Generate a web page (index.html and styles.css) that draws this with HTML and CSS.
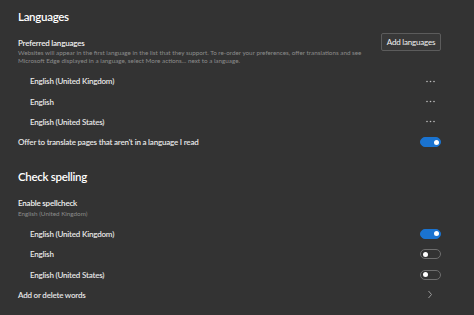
FILE: index.html
```html
<!DOCTYPE html>
<html lang="en">
    <head>
        <meta charset="UTF-8">
        <meta name="viewport" content="width=device-width, initial-scale=1.0">
        <title>Languages</title>
        <link rel="stylesheet" href="styles.css">
    </head>
    <body>
        <div class="page">

            <h2 class="heading">Languages</h2>

            <div class="pref">
                <div class="pref-text">
                    <div class="title">Preferred languages</div>
                    <div class="desc">Websites will appear in the first language in the list that they support. To re-order your preferences, offer translations and see
                        <br>Microsoft Edge displayed in a language, select More actions... next to a language.</div>
                </div>
                <button class="btn">Add languages</button>
            </div>

            <div class="list">
                <div class="row sub">
                    <span>English (United Kingdom)</span>
                    <svg class="more" width="9" height="3" viewBox="0 0 9 3"><circle cx="1" cy="1.5" r="0.8"/><circle cx="4.5" cy="1.5" r="0.8"/><circle cx="8" cy="1.5" r="0.8"/></svg>
                </div>
                <div class="row sub">
                    <span>English</span>
                    <svg class="more" width="9" height="3" viewBox="0 0 9 3"><circle cx="1" cy="1.5" r="0.8"/><circle cx="4.5" cy="1.5" r="0.8"/><circle cx="8" cy="1.5" r="0.8"/></svg>
                </div>
                <div class="row sub">
                    <span>English (United States)</span>
                    <svg class="more" width="9" height="3" viewBox="0 0 9 3"><circle cx="1" cy="1.5" r="0.8"/><circle cx="4.5" cy="1.5" r="0.8"/><circle cx="8" cy="1.5" r="0.8"/></svg>
                </div>
                <div class="row">
                    <span>Offer to translate pages that aren't in a language I read</span>
                    <span class="toggle on"></span>
                </div>
            </div>

            <h2 class="heading second">Check spelling</h2>

            <div class="spell">
                <div class="title">Enable spellcheck</div>
                <div class="hint">English (United Kingdom)</div>
            </div>

            <div class="list tight">
                <div class="row sub">
                    <span>English (United Kingdom)</span>
                    <span class="toggle on"></span>
                </div>
                <div class="row sub">
                    <span>English</span>
                    <span class="toggle"></span>
                </div>
                <div class="row sub">
                    <span>English (United States)</span>
                    <span class="toggle"></span>
                </div>
                <div class="row">
                    <span>Add or delete words</span>
                    <svg class="chevron" width="6" height="9" viewBox="0 0 6 9"><polyline points="1.5,1 4.5,4.5 1.5,8"/></svg>
                </div>
            </div>

        </div>
    </body>
</html>
```

FILE: styles.css
```css
* {
    box-sizing: border-box;
}

body {
    margin: 0;
    background: #333333;
    color: #e8e8e8;
    font-family: Lato, 'Open Sans', sans-serif;
}

.page {
    padding: 7px 33px 0 18px;
}

.heading {
    margin: 0;
    height: 20px;
    line-height: 20px;
    font-size: 11.5px;
    font-weight: 600;
    letter-spacing: -0.3px;
    color: #ffffff;
}

.heading.second {
    margin-top: 14px;
}

.pref {
    display: flex;
    justify-content: space-between;
    align-items: flex-start;
}

.pref-text {
    padding-top: 10px;
    white-space: nowrap;
}

.title {
    height: 12px;
    line-height: 12px;
    font-size: 8px;
    font-weight: 600;
    letter-spacing: -0.2px;
    color: #f2f2f2;
}

.desc {
    font-size: 6.3px;
    line-height: 8px;
    color: #8c8c8c;
}

.btn {
    margin-top: 6px;
    width: 60px;
    height: 18px;
    padding: 0;
    border: 1px solid #5c5c5c;
    border-radius: 2px;
    background: #383838;
    color: #f2f2f2;
    font-family: inherit;
    font-size: 8px;
    letter-spacing: -0.2px;
}

.list {
    margin-top: 6px;
}

.list.tight {
    margin-top: 5px;
}

.row {
    display: flex;
    justify-content: space-between;
    align-items: center;
    height: 20.4px;
    font-size: 8px;
    font-weight: 600;
    letter-spacing: -0.2px;
    color: #e8e8e8;
}

.row.sub {
    padding-left: 12px;
}

.more {
    margin-right: 6px;
    fill: #bdbdbd;
}

.chevron {
    margin-right: 8px;
    fill: none;
    stroke: #9a9a9a;
    stroke-width: 1;
}

.spell {
    margin-top: 10px;
}

.hint {
    height: 10px;
    line-height: 10px;
    font-size: 6.3px;
    color: #8c8c8c;
}

.toggle {
    position: relative;
    width: 21px;
    height: 10px;
    border-radius: 5px;
    border: 1px solid #6e6e6e;
}

.toggle::after {
    content: "";
    position: absolute;
    top: 1.5px;
    left: 1.5px;
    width: 5px;
    height: 5px;
    border-radius: 50%;
    background: #ffffff;
}

.toggle.on {
    background: #1a73d0;
    border-color: #1a73d0;
}

.toggle.on::after {
    left: auto;
    right: 1.5px;
}
```
